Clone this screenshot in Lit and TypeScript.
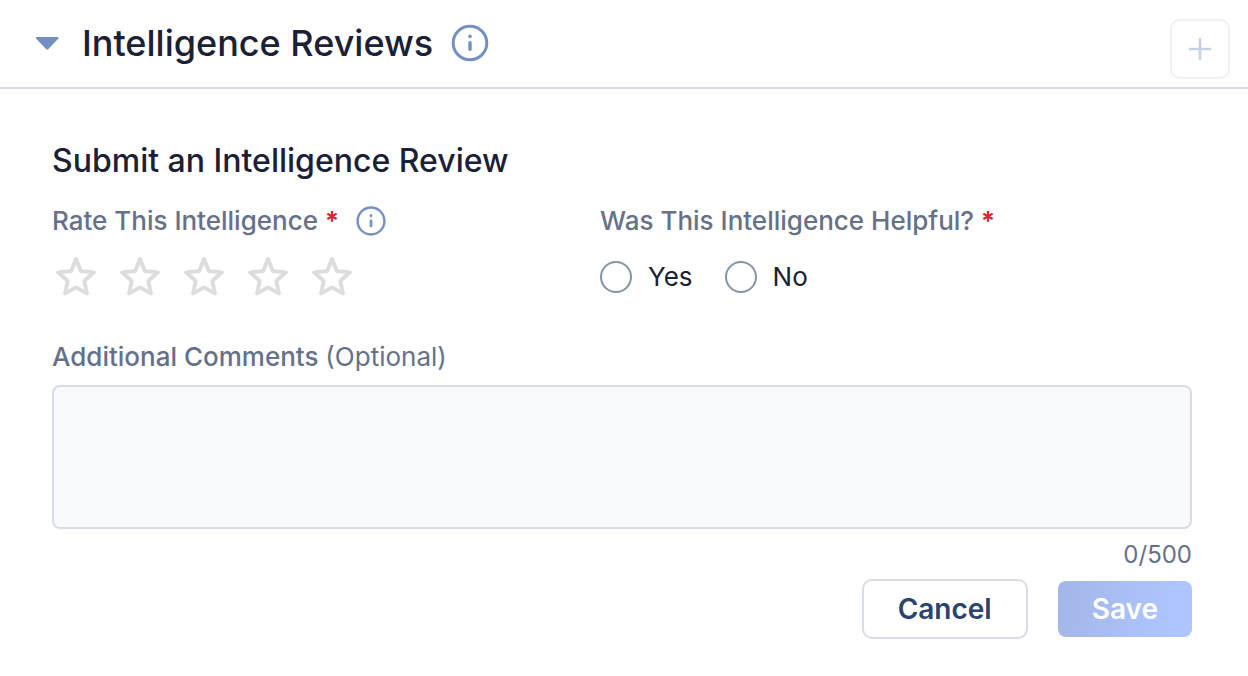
import { LitElement, html, css } from "lit";
import { customElement, property, state } from "lit/decorators.js";
import { classMap } from "lit/directives/class-map.js";

const MAX_COMMENT = 500;

@customElement("info-icon")
class InfoIcon extends LitElement {
  @property({ type: Number }) size = 32;

  static styles = css`
    :host { display: inline-flex; color: #7390c4; }
    svg { display: block; }
  `;

  render() {
    return html`<svg width=${this.size} height=${this.size} viewBox="0 0 40 40" fill="none" aria-hidden="true">
      <circle cx="20" cy="20" r="16.8" stroke="currentColor" stroke-width="3"></circle>
      <circle cx="20" cy="13.4" r="1.8" fill="currentColor"></circle>
      <path d="M20 19.8v6.4" stroke="currentColor" stroke-width="3.4" stroke-linecap="round"></path>
    </svg>`;
  }
}

@customElement("star-rating")
class StarRating extends LitElement {
  @state() private rating = 0;

  static styles = css`
    :host { display: block; }
    .stars { display: flex; gap: 16px; margin: 0; padding: 0; border: 0; }
    .star { display: block; position: relative; width: 48px; height: 48px; color: #dcdddf; cursor: pointer; }
    .star.on { color: #f0b429; }
    .star input { position: absolute; inset: 0; width: 100%; height: 100%; margin: 0; opacity: 0; cursor: pointer; }
    .star svg { display: block; }
    .star.on path { fill: currentColor; }
  `;

  render() {
    return html`<fieldset class="stars" aria-label="Rate This Intelligence">
      ${[1, 2, 3, 4, 5].map(
        (n) => html`<label class=${classMap({ star: true, on: n <= this.rating })}>
          <input type="radio" name="rating" value=${n} aria-label=${`${n} of 5`} @change=${() => (this.rating = n)} />
          <svg width="48" height="48" viewBox="0 0 48 48" fill="none" aria-hidden="true">
            <path
              d="M24 6 L28.8 18 L42 19.4 L32.3 28 L35 40.6 L24 34.3 L13 40.6 L15.7 28 L6 19.4 L19.2 18 Z"
              stroke="currentColor" stroke-width="3.8" stroke-linejoin="round"></path>
          </svg>
        </label>`
      )}
    </fieldset>`;
  }
}

@customElement("app-root")
class AppRoot extends LitElement {
  @state() private open = true;
  @state() private comment = "";

  static styles = css`
    :host {
      display: block;
      min-height: 100vh;
      background: #fff;
      color: #1a2035;
      font-family: Inter, "Liberation Sans", sans-serif;
    }
    * { box-sizing: border-box; }
    button { font-family: inherit; cursor: pointer; }
    h1, h2 { margin: 0; font-weight: 500; }
    .header {
      display: flex;
      align-items: flex-start;
      justify-content: space-between;
      padding: 19px 18px 8px 34px;
      border-bottom: 2px solid #d8dce8;
    }
    .heading { display: flex; align-items: center; height: 48px; }
    .toggle { display: flex; margin-right: 22px; padding: 0; border: 0; background: none; }
    .toggle.closed svg { transform: rotate(-90deg); }
    h1 { font-size: 36px; line-height: 48px; }
    .heading info-icon { margin-left: 17px; }
    .add {
      display: flex;
      align-items: center;
      justify-content: center;
      width: 60px;
      height: 60px;
      padding: 0;
      border: 2px solid #f0f1f6;
      border-radius: 10px;
      background: #fff;
    }
    .form { padding: 52px 56px 36px 52px; }
    h2 { font-size: 32px; line-height: 40px; margin-bottom: 22px; }
    .questions { display: grid; grid-template-columns: 25fr 27fr; margin-bottom: 38px; }
    .label {
      display: flex;
      align-items: center;
      height: 36px;
      padding: 0;
      color: #667088;
      font-size: 26px;
      font-weight: 500;
      line-height: 36px;
      white-space: pre;
    }
    .label info-icon { margin-left: 16px; }
    .required { color: #d9202e; font-weight: 600; }
    .optional { font-weight: 400; }
    .answer { margin-top: 14px; }
    .helpful { min-width: 0; margin: 0; padding: 0; border: 0; }
    .choices { display: flex; gap: 32px; height: 48px; align-items: center; }
    .choice { display: flex; align-items: center; gap: 16px; font-size: 26px; line-height: 36px; cursor: pointer; }
    .choice input {
      appearance: none;
      width: 32px;
      height: 32px;
      margin: 0;
      border: 2px solid #8593a9;
      border-radius: 50%;
      background: #fff;
    }
    .choice input:checked { border: 10px solid #7390c4; }
    textarea {
      display: block;
      width: 100%;
      height: 144px;
      margin-top: 10px;
      padding: 12px 16px;
      border: 2px solid #d8dce8;
      border-radius: 8px;
      background: #f9fafc;
      color: inherit;
      font: 400 26px/36px Inter, "Liberation Sans", sans-serif;
      resize: none;
    }
    .count { margin: 10px 0 8px; color: #667088; font-size: 24px; line-height: 32px; text-align: right; }
    .actions { display: flex; justify-content: flex-end; align-items: center; gap: 30px; }
    .cancel, .save { padding: 0 34px; font-size: 28px; font-weight: 600; line-height: 36px; }
    .cancel { height: 60px; border: 2px solid #d8dce8; border-radius: 10px; background: #fff; color: #2c4270; }
    .save { height: 56px; border: 0; border-radius: 8px; background: linear-gradient(100deg, #a4b6e8, #aec5ff 85%); color: #fff; }
  `;

  render() {
    return html`
      <header class="header">
        <div class="heading">
          <button
            class=${classMap({ toggle: true, closed: !this.open })}
            aria-label="Toggle section"
            aria-expanded=${this.open}
            @click=${() => (this.open = !this.open)}
          >
            <svg width="26" height="26" viewBox="0 0 26 26" aria-hidden="true">
              <path d="M3 7H23.4Q25.4 7.2 24.2 8.7L14.4 19Q13.2 20.2 12 19L2.2 8.7Q1 7.2 3 7Z" fill="#7390c4"></path>
            </svg>
          </button>
          <h1>Intelligence Reviews</h1>
          <info-icon .size=${40}></info-icon>
        </div>
        <button class="add" aria-label="Add review">
          <svg width="24" height="24" viewBox="0 0 24 24" fill="none" aria-hidden="true">
            <path d="M12 2V22M2 12H22" stroke="#c6d1e7" stroke-width="2.6" stroke-linecap="round"></path>
          </svg>
        </button>
      </header>
      ${this.open ? this.renderForm() : ""}
    `;
  }

  private renderForm() {
    return html`<form class="form" @submit=${(e: Event) => e.preventDefault()}>
      <h2>Submit an Intelligence Review</h2>
      <div class="questions">
        <div>
          <div class="label"><span>Rate This Intelligence <span class="required">*</span></span><info-icon .size=${32}></info-icon></div>
          <star-rating class="answer"></star-rating>
        </div>
        <fieldset class="helpful">
          <legend class="label"><span>Was This Intelligence Helpful? <span class="required">*</span></span></legend>
          <div class="choices answer">
            <label class="choice"><input type="radio" name="helpful" value="yes" />Yes</label>
            <label class="choice"><input type="radio" name="helpful" value="no" />No</label>
          </div>
        </fieldset>
      </div>
      <label class="label" for="comments">Additional Comments <span class="optional">(Optional)</span></label>
      <textarea
        id="comments"
        maxlength=${MAX_COMMENT}
        .value=${this.comment}
        @input=${(e: Event) => (this.comment = (e.target as HTMLTextAreaElement).value)}
      ></textarea>
      <div class="count">${this.comment.length}/${MAX_COMMENT}</div>
      <div class="actions">
        <button class="cancel" type="button">Cancel</button>
        <button class="save" type="submit">Save</button>
      </div>
    </form>`;
  }
}
